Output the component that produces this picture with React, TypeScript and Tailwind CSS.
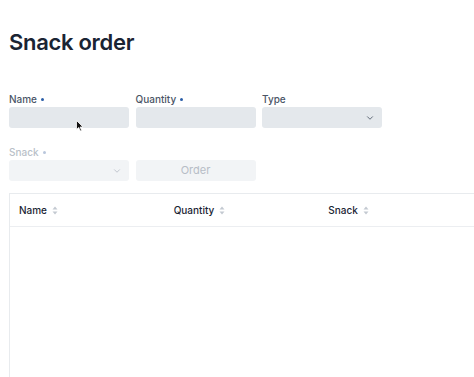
import { ChevronDown } from "lucide-react";

const SortIcon = () => (
  <svg width="6" height="9" viewBox="0 0 6 9" className="ml-[5px] text-[#c3c9d1]">
    <path d="M3 0.5 L5.5 3.5 H0.5 Z" fill="currentColor" />
    <path d="M3 8.5 L5.5 5.5 H0.5 Z" fill="currentColor" />
  </svg>
);

const Field = ({
  label,
  required,
  disabled,
  select,
}: {
  label: string;
  required?: boolean;
  disabled?: boolean;
  select?: boolean;
}) => (
  <div className="flex w-[120px] flex-col">
    <label
      className={`mb-[2px] flex h-[12px] items-center text-[10px] font-medium ${
        disabled ? "text-[#b9bfc8]" : "text-[#4a5566]"
      }`}
    >
      {label}
      {required && (
        <span
          className={`ml-[4px] inline-block h-[3px] w-[3px] rounded-full ${
            disabled ? "bg-[#b9c6dc]" : "bg-[#2a5ea8]"
          }`}
        />
      )}
    </label>
    <div
      className={`flex h-[21px] items-center justify-end rounded-[3px] px-[7px] ${
        disabled ? "bg-[#f2f4f6]" : "bg-[#e4e8ec]"
      }`}
    >
      {select && (
        <ChevronDown
          size={10}
          strokeWidth={2.2}
          className={disabled ? "text-[#bcc2ca]" : "text-[#56606f]"}
        />
      )}
    </div>
  </div>
);

export default function App() {
  return (
    <div
      className="relative h-[377px] w-[474px] overflow-hidden bg-white text-[#1a2433]"
      style={{ fontFamily: "Inter, 'Noto Sans', sans-serif" }}
    >
      <div className="pl-[9px] pt-[29px]">
        <h1 className="text-[22px] font-semibold leading-[26px] tracking-[-0.3px]">
          Snack order
        </h1>

        <div className="mt-[38px] flex gap-[6.5px]">
          <Field label="Name" required />
          <Field label="Quantity" required />
          <Field label="Type" select />
        </div>

        <div className="mt-[18px] flex gap-[6.5px]">
          <Field label="Snack" required disabled select />
          <div className="flex w-[120px] flex-col justify-end">
            <button className="flex h-[21px] items-center justify-center rounded-[3px] bg-[#f2f4f6] text-[11px] font-normal text-[#b7bdc6]">
              Order
            </button>
          </div>
        </div>

        <div className="mt-[12px] h-[200px] w-[466px] border border-[#e8ebee]">
          <div className="grid h-[33px] grid-cols-3 items-center border-b border-[#eceef1] text-[10px] font-medium">
            <div className="flex items-center pl-[9px]">
              Name
              <SortIcon />
            </div>
            <div className="flex items-center pl-[9px]">
              Quantity
              <SortIcon />
            </div>
            <div className="flex items-center pl-[9px]">
              Snack
              <SortIcon />
            </div>
          </div>
        </div>
      </div>

      {/* mouse pointer */}
      <svg
        width="8"
        height="12"
        viewBox="0 0 8 12"
        className="absolute left-[76px] top-[120px]"
      >
        <path
          d="M0.5 0.5 V9.5 L2.7 7.5 L4.3 11 L5.6 10.4 L4.1 7 H7 Z"
          fill="#111"
          stroke="#fff"
          strokeWidth="0.8"
        />
      </svg>
    </div>
  );
}
